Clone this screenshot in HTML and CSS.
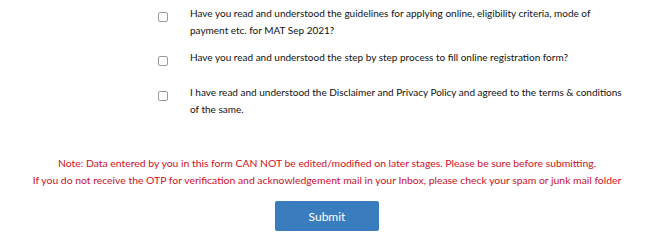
FILE: index.html
```html
<!DOCTYPE html>
<html>
<head>
    <title>Declaration</title>
    <link rel="stylesheet" href="styles.css">
</head>
<body>
    <div class="declarations">
        <div class="decl-row">
            <input type="checkbox" class="decl-check">
            <p class="decl-text">Have you read and understood the guidelines for applying online, eligibility criteria, mode of<br>payment etc. for MAT Sep 2021?</p>
        </div>
        <div class="decl-row">
            <input type="checkbox" class="decl-check">
            <p class="decl-text">Have you read and understood the step by step process to fill online registration form?</p>
        </div>
        <div class="decl-row">
            <input type="checkbox" class="decl-check">
            <p class="decl-text">I have read and understood the Disclaimer and Privacy Policy and agreed to the terms &amp; conditions of the same.</p>
        </div>
    </div>

    <div class="note">
        <p>Note: Data entered by you in this form CAN NOT be edited/modified on later stages. Please be sure before submitting.</p>
        <p>If you do not receive the OTP for verification and acknowledgement mail in your Inbox, please check your spam or junk mail folder</p>
    </div>

    <div class="actions">
        <button type="submit" class="submit-btn">Submit</button>
    </div>
</body>
</html>
```

FILE: styles.css
```css
body {
    font-family: Lato, "Open Sans", sans-serif;
    margin: 0;
    width: 654px;
    height: 234px;
    overflow: hidden;
    background: #fff;
    color: #111;
}

.declarations {
    padding: 5px 0 0 158px;
}

.decl-row {
    display: flex;
    align-items: flex-start;
    margin-bottom: 10px;
}

.decl-row:nth-child(2) {
    margin-bottom: 18px;
}

.decl-check {
    appearance: none;
    width: 10px;
    height: 10px;
    margin: 7px 22px 0 0;
    border: 1px solid #9a9a9a;
    border-radius: 2px;
    background: #fff;
    flex-shrink: 0;
}

.decl-text {
    margin: 0;
    width: 440px;
    font-size: 10px;
    line-height: 17px;
}

.note {
    margin-top: 37px;
    text-align: center;
    color: #cc0f26;
    font-size: 10.4px;
    line-height: 17px;
}

.note p {
    margin: 0;
}

.actions {
    display: flex;
    justify-content: center;
    margin-top: 12px;
}

.submit-btn {
    width: 104px;
    height: 30px;
    border: none;
    border-radius: 2px;
    background-color: #3a7dbf;
    color: #fff;
    font-family: Lato, sans-serif;
    font-size: 12px;
    cursor: pointer;
}
```
